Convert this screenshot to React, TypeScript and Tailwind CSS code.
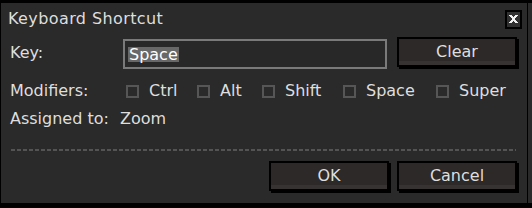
import React from 'react';

const modifiers = [
  { label: 'Ctrl', width: 'w-[26px]' },
  { label: 'Alt', width: 'w-[20px]' },
  { label: 'Shift', width: 'w-[36px]' },
  { label: 'Space', width: 'w-[48px]' },
  { label: 'Super', width: 'w-[45px]' },
];

function PixelButton({ label, className = '' }: { label: string; className?: string }) {
  return (
    <button
      className={`w-[120px] h-[30px] border-2 border-black bg-[#2d2929] text-[#dedede] shadow-[inset_0_-4px_0_#373333,2px_2px_0_#000] flex items-center justify-center leading-none pb-px ${className}`}
    >
      {label}
    </button>
  );
}

function Checkbox({ label, width }: { label: string; width: string }) {
  return (
    <label className="flex items-center gap-[10px]">
      <span className="w-[13px] h-[13px] border-2 border-[#565656]" />
      <span className={`${width} whitespace-nowrap`}>{label}</span>
    </label>
  );
}

export default function App() {
  return (
    <div
      className="w-[532px] h-[208px] bg-black pt-[3px] pb-[5px] pl-px flex text-[16px] text-[#dedede]"
      style={{ fontFamily: '"DejaVu Sans", sans-serif' }}
    >
      <div className="w-[527px] h-[200px] bg-[#2a2a2a] border-r border-black flex flex-col">
        {/* Title bar */}
        <div className="h-[32px] flex items-center justify-between pl-[7px] pr-[5px]">
          <span className="tracking-[0.4px]">Keyboard Shortcut</span>
          <button className="w-[17px] h-[19px] border-2 border-black bg-[#303030] flex items-center justify-center">
            <svg width="9" height="10" viewBox="0 0 9 10" shapeRendering="crispEdges">
              <path d="M1 1L8 9M8 1L1 9" stroke="#f0f0f0" strokeWidth={2} />
            </svg>
          </button>
        </div>

        {/* Key */}
        <div className="mt-[2px] h-[32px] flex items-center pl-[9px] pr-[10px]">
          <span className="w-[113px]">Key:</span>
          <div className="w-[264px] h-[30px] self-end border-2 border-[#7a7a7a] bg-[#282828] flex items-center pl-[3px]">
            <span className="bg-[#686868] text-white leading-[15px] px-px">Space</span>
          </div>
          <PixelButton label="Clear" className="ml-[10px] self-start" />
        </div>

        {/* Modifiers */}
        <div className="mt-[10px] h-[24px] flex items-center pl-[9px]">
          <span className="w-[116px]">Modifiers:</span>
          <div className="flex items-center gap-[22px]">
            {modifiers.map((m) => (
              <Checkbox key={m.label} label={m.label} width={m.width} />
            ))}
          </div>
        </div>

        {/* Assigned */}
        <div className="mt-[4px] h-[24px] flex items-center pl-[9px]">
          <span className="w-[110px]">Assigned to:</span>
          <span>Zoom</span>
        </div>

        <div className="mt-[18px] ml-[10px] mr-[11px] h-[2px] bg-[repeating-linear-gradient(90deg,#545454_0_4px,transparent_4px_6px)]" />

        {/* Footer */}
        <div className="mt-[10px] flex justify-end gap-[8px] pr-[10px]">
          <PixelButton label="OK" />
          <PixelButton label="Cancel" />
        </div>
      </div>
      <div className="w-[4px] h-[200px] bg-[#2a2a2a]" />
    </div>
  );
}
